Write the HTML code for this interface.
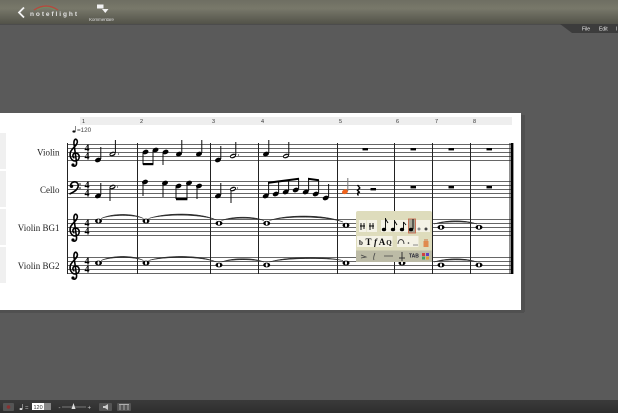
<!DOCTYPE html>
<html><head><meta charset="utf-8"><style>
html,body{margin:0;padding:0;width:618px;height:413px;overflow:hidden;background:#5a5a5a}
svg{display:block;position:absolute;left:0;top:0}
.s{font-family:"Liberation Serif",serif}
.a{font-family:"Liberation Sans",sans-serif}
</style></head><body>
<svg width="618" height="413" viewBox="0 0 618 413" xmlns="http://www.w3.org/2000/svg">
<defs>
<linearGradient id="h" x1="0" y1="0" x2="0" y2="1"><stop offset="0" stop-color="#6e6e62"/><stop offset=".35" stop-color="#78786a"/><stop offset="1" stop-color="#525249"/></linearGradient>
<linearGradient id="b" x1="0" y1="0" x2="0" y2="1"><stop offset="0" stop-color="#3a3a3a"/><stop offset="1" stop-color="#2e2e2e"/></linearGradient>
<filter id="bl" x="0" y="0" width="100%" height="100%"><feGaussianBlur stdDeviation="0.3"/></filter>
<g id="n"><ellipse cx="0" cy="0" rx="3.1" ry="2.2" transform="rotate(-22)" fill="#000"/></g>
<g id="o"><ellipse cx="0" cy="0" rx="3.2" ry="2.2" transform="rotate(-22)" fill="#111"/><ellipse cx="0" cy="0" rx="2.2" ry=".8" transform="rotate(-22)" fill="#fff"/></g>
<g id="w"><ellipse cx="0" cy="0" rx="3.5" ry="2.4" fill="#000"/><ellipse cx="0" cy="0" rx="1" ry="1.8" fill="#fff"/></g>
<g id="tc"><path d="M73 165.500C75 167.500 77 165 76.500 162L74 144C73.500 139.500 76 137.500 77.300 141C78.300 145 72 148 70.500 152C69 157 72 161 75 161C80.500 161 80.500 153 75.500 153C72.500 153 72 157 74.500 158" fill="none" stroke="#000" stroke-width="1.6"/><circle cx="73" cy="165" r="1.6" fill="#000"/></g>
</defs>
<rect width="618" height="24" fill="url(#h)"/>
<rect y="24" width="618" height="1" fill="#4c4c4c"/>
<path d="M24 7.500L19 12.500L24 17.500" fill="none" stroke="#f2f2f2" stroke-width="1.800"/>
<path d="M34 10Q46 2 58 10" fill="none" stroke="#b8483c" stroke-width="1.300"/>
<path d="M37 10Q46 5 55 10" fill="none" stroke="#6c9060" stroke-width=".8"/>
<text class="a" x="30" y="16" font-size="6.500" fill="#e4e4e4" textLength="47" lengthAdjust="spacing" font-weight="bold">noteflight</text>
<rect x="97" y="4.500" width="6.500" height="4" fill="#f2f2f2"/>
<path d="M102 9h6.500l-3.200 4z" fill="#f2f2f2"/>
<text class="a" x="89" y="21" font-size="4.700" fill="#d8d8d8" textLength="25">Kommentare</text>
<path d="M560 24H618V33H572Z" fill="#3c3c3c"/>
<text class="a" x="582" y="30.500" font-size="5" fill="#f0f0f0">File</text>
<text class="a" x="599" y="30.500" font-size="5" fill="#f0f0f0">Edit</text>
<text class="a" x="616" y="30.500" font-size="5" fill="#f0f0f0">I</text>
<rect x="521" y="115" width="4" height="197" fill="#505050"/>
<rect x="0" y="310" width="524" height="3" fill="#505050"/>
<rect x="0" y="113" width="521" height="197" fill="#fff"/>
<rect x="0" y="133" width="6" height="36" fill="#f0f0f0"/>
<rect x="0" y="171" width="6" height="36" fill="#f0f0f0"/>
<rect x="0" y="209" width="6" height="36" fill="#f0f0f0"/>
<rect x="0" y="247" width="6" height="36" fill="#f0f0f0"/>
<rect x="80" y="117" width="432" height="8" fill="#eeeeee"/>
<g filter="url(#bl)">
<g class="a" font-size="5.500" fill="#333">
<text x="82" y="123">1</text><text x="140" y="123">2</text><text x="212" y="123">3</text><text x="261" y="123">4</text><text x="339" y="123">5</text><text x="396" y="123">6</text><text x="435" y="123">7</text><text x="473" y="123">8</text>
</g>
<ellipse cx="74" cy="131.500" rx="1.600" ry="1.100" fill="#111"/><path d="M75.300 131.500V126" stroke="#111" stroke-width=".5"/>
<text class="a" x="77" y="132" font-size="6.300" fill="#444">=120</text>
<g class="s" font-size="9" fill="#222" text-anchor="end">
<text x="59.500" y="155.500">Violin</text>
<text x="59.500" y="193">Cello</text>
<text x="59.500" y="231">Violin BG1</text>
<text x="59.500" y="269">Violin BG2</text>
</g>
<g stroke="#666" stroke-width="1">
<path d="M67 144.500H511M67 148.500H511M67 152.500H511M67 156.500H511M67 160.500H511"/>
<path d="M67 181.500H511M67 185.500H511M67 189.500H511M67 193.500H511M67 197.500H511"/>
<path d="M67 219.500H511M67 223.500H511M67 227.500H511M67 231.500H511M67 235.500H511"/>
<path d="M67 257.500H511M67 261.500H511M67 265.500H511M67 269.500H511M67 273.500H511"/>
</g>
<g stroke="#222" stroke-width="1">
<path d="M67.500 143V274M137.500 143V274M210.500 143V274M258.500 143V274M337.500 143V274M394.500 143V274M432.500 143V274M470.500 143V274M510 143V274"/>
</g>
<rect x="511" y="143" width="2.400" height="131" fill="#000"/>
<use href="#tc"/>
<use href="#tc" y="75"/>
<use href="#tc" y="113"/>
<path d="M70.500 186.500C70 182 76 180 78 184C79.500 189 74 192 69.500 194" fill="none" stroke="#000" stroke-width="1.600"/>
<circle cx="71.500" cy="186.300" r="1.700" fill="#000"/><circle cx="80" cy="184" r=".8" fill="#000"/><circle cx="80" cy="188" r=".8" fill="#000"/>
<g class="s" font-size="10" font-weight="bold" fill="#000" text-anchor="middle">
<text x="87" y="151.500">4</text><text x="87" y="159.500">4</text>
<text x="87" y="188.500">4</text><text x="87" y="196.500">4</text>
<text x="87" y="226.500">4</text><text x="87" y="234.500">4</text>
<text x="87" y="264.500">4</text><text x="87" y="272.500">4</text>
</g>
<use href="#n" x="98" y="160"/><use href="#o" x="112.500" y="154"/>
<use href="#n" x="145.500" y="152"/><use href="#n" x="155.500" y="150"/><use href="#n" x="165.500" y="152"/>
<use href="#n" x="179" y="154"/><use href="#n" x="199" y="154"/>
<use href="#n" x="218" y="160"/><use href="#o" x="233" y="156"/>
<use href="#n" x="266" y="154"/><use href="#o" x="286" y="156"/>
<g stroke="#111" stroke-width="1" fill="none">
<path d="M100.800 159V147M115.400 153V140M143 153V164.500M153 151V164M163 153V165M181.800 153V140M201.800 153V140M220.800 159V146M235.800 155V142M268.800 153V140M288.800 155V142"/>
</g>
<path d="M143 163H153.400V165.200H143Z" fill="#000"/>
<circle cx="118.500" cy="154" r=".6" fill="#222"/><circle cx="238.500" cy="155" r=".6" fill="#222"/>
<use href="#n" x="98" y="196"/><use href="#o" x="112.500" y="187"/>
<use href="#n" x="145" y="182"/><use href="#n" x="165" y="183"/><use href="#n" x="178.500" y="186"/><use href="#n" x="189" y="183"/><use href="#n" x="199" y="186"/>
<use href="#n" x="218" y="196"/><use href="#o" x="233" y="189"/>
<use href="#n" x="265.700" y="196"/><use href="#n" x="275.700" y="194"/><use href="#n" x="285.700" y="192"/><use href="#n" x="295.700" y="190"/><use href="#n" x="305.700" y="192"/><use href="#n" x="315.700" y="194"/><use href="#n" x="325.700" y="198"/>
<g stroke="#111" stroke-width="1" fill="none">
<path d="M100.800 195V183M110 188V201M143 183V196M163 184V197M176 187V199M187 184V199M197 187V199M220.800 195V183M231 190V203"/>
<path d="M268.600 195V182.500M278.600 193V181M288.600 191V180M298.600 189V178.500M308.600 191V178.500M318.600 193V180M328.600 197V184"/>
</g>
<path d="M176 198H187.400V200.200H176ZM268 181.800L299 177.700V179.800L268 183.900ZM308 177.700L319 179.200V181.200L308 179.700Z" fill="#000"/>
<circle cx="117.500" cy="187" r=".6" fill="#222"/><circle cx="237.500" cy="188" r=".6" fill="#222"/>
<ellipse cx="345" cy="191.700" rx="3.100" ry="2.300" transform="rotate(-22 345 191.700)" fill="#f0641e"/>
<path d="M347.800 191V178" stroke="#777" stroke-width="1"/>
<path d="M357.500 185L359.800 188L357.500 190.500L359.800 192.500C357.500 192 357 194 358.500 195.500" fill="none" stroke="#000" stroke-width="1.400"/>
<g fill="#000">
<rect x="362.500" y="148" width="5.500" height="2.400"/><rect x="410.500" y="148" width="5.500" height="2.400"/><rect x="448.500" y="148" width="5.500" height="2.400"/><rect x="486.500" y="148" width="5.500" height="2.400"/>
<rect x="370.500" y="188" width="5.500" height="2.400"/><rect x="410.500" y="186" width="5.500" height="2.400"/><rect x="448.500" y="186" width="5.500" height="2.400"/><rect x="486.500" y="186" width="5.500" height="2.400"/>
</g>
<use href="#w" x="98.500" y="221"/><use href="#w" x="146" y="221"/><use href="#w" x="219" y="223.300"/><use href="#w" x="266.700" y="223.300"/><use href="#w" x="346" y="225.300"/><use href="#w" x="402" y="225.500"/><use href="#w" x="441" y="227.300"/><use href="#w" x="479" y="227.300"/>
<use href="#w" x="98.500" y="263"/><use href="#w" x="146" y="263"/><use href="#w" x="219" y="265"/><use href="#w" x="266.700" y="265"/><use href="#w" x="346" y="263"/><use href="#w" x="402" y="263"/><use href="#w" x="441" y="265"/><use href="#w" x="479" y="265"/>
<g fill="#222" stroke="#333" stroke-width=".5">
<path d="M101 218.500C112 213 134 213 143.500 218.500C134 214.500 112 214.500 101 218.500Z"/>
<path d="M148.500 218.500C165 212.500 200 212 216.500 220C200 213.800 165 214 148.500 218.500Z"/>
<path d="M221.500 220.500C232 216 254 216 264 220.500C254 217.500 232 217.500 221.500 220.500Z"/>
<path d="M269.500 220.500C285 214.500 325 214 343 222C325 215.800 285 216 269.500 220.500Z"/>
<path d="M434 224C445 220 465 219.500 477 224C465 221 445 221.500 434 224Z"/>
<path d="M101 260.500C112 255 134 255 143.500 260.500C134 256.500 112 256.500 101 260.500Z"/>
<path d="M148.500 260.500C165 255 200 254.500 216.500 262C200 256 165 256.500 148.500 260.500Z"/>
<path d="M221.500 262C232 257.500 254 257.500 264 262C254 259 232 259 221.500 262Z"/>
<path d="M269.500 262C285 256.500 325 256 343 260.500C325 257.500 285 258 269.500 262Z"/>
<path d="M434 262C445 258 465 257.500 477 262C465 259 445 259.500 434 262Z"/>
</g>
<rect x="356" y="211" width="76" height="51" rx="2" fill="#dedcbc"/>
<rect x="356" y="250.500" width="76" height="11.500" fill="#bcbba6"/>
<g fill="#f4f2e6">
<rect x="359" y="220" width="7.500" height="12"/><rect x="367" y="220" width="10" height="12"/>
<rect x="381" y="220" width="9" height="12"/><rect x="390" y="220" width="9" height="12"/><rect x="399" y="220" width="9" height="12"/><rect x="416" y="220" width="7" height="12"/><rect x="423" y="220" width="7" height="12"/>
<rect x="357" y="236" width="8" height="11"/><rect x="365" y="236" width="7" height="11"/><rect x="372" y="236" width="6.500" height="11"/><rect x="378.500" y="236" width="7" height="11"/><rect x="385.500" y="236" width="7" height="11"/>
<rect x="397" y="236" width="8" height="11"/><rect x="405" y="236" width="7" height="11"/><rect x="412" y="236" width="6.500" height="11"/>
</g>
<rect x="408.500" y="219" width="7" height="14" fill="#a8a898" stroke="#c86a50" stroke-width=".9"/>
<g fill="#000" stroke="#000" stroke-width=".9">
<path d="M361 223V230M364 223V229M370 223V230M373 223V229M360 226H365M369 226H374"/>
<ellipse cx="384" cy="229.500" rx="1.700" ry="1.300"/><path d="M385.500 229V218M385.500 219L388 223"/>
<ellipse cx="393" cy="229.500" rx="1.700" ry="1.300"/><path d="M394.500 229V220M394.500 221L397 225"/>
<ellipse cx="402" cy="229.500" rx="1.700" ry="1.300"/><path d="M403.500 229V222M403.500 222L406 225"/>
<ellipse cx="411" cy="229.500" rx="1.700" ry="1.300"/><path d="M413 229V219"/>
</g>
<circle cx="419" cy="229" r="1.500" fill="#888"/><circle cx="426" cy="229" r="1.500" fill="#444"/>
<g class="s" font-size="9" fill="#111" font-weight="bold" text-anchor="middle">
<text x="361" y="245" font-size="7">b</text><text x="368.500" y="245">T</text><text x="375.500" y="245" font-style="italic">f</text><text x="382" y="245">A</text><text x="389" y="245" font-size="7">Q</text>
</g>
<path d="M398 244C398 238 404 238 404 244" fill="none" stroke="#333" stroke-width=".9"/>
<circle cx="408.500" cy="243" r=".8" fill="#333"/><path d="M413 245H418" stroke="#888" stroke-width="1"/>
<rect x="423.500" y="241" width="5" height="6" fill="#e08a50"/><rect x="424" y="239.500" width="4" height="1" fill="#c87040"/>
<path d="M361 255L366 257L361 258M375 253Q373 258 374 260M384 256H393" fill="none" stroke="#444" stroke-width=".8"/>
<path d="M402 252V261M399 258H405" stroke="#333" stroke-width="1"/>
<text class="a" x="409" y="257.500" font-size="5" font-weight="bold" fill="#223">TAB</text>
<rect x="422" y="253" width="3" height="3" fill="#d04040"/><rect x="426" y="253" width="3" height="3" fill="#6040c0"/><rect x="422" y="256.500" width="3" height="3" fill="#40a060"/><rect x="426" y="256.500" width="3" height="3" fill="#e0a030"/>
</g>
<rect y="400" width="618" height="13" fill="url(#b)"/>
<rect x="3" y="403" width="11" height="8" rx="1" fill="#555"/><circle cx="8.500" cy="407" r="1.800" fill="#8a3030"/>
<ellipse cx="21" cy="409" rx="1.500" ry="1" fill="#ddd"/><path d="M22.300 409V404" stroke="#ddd" stroke-width=".5"/>
<text class="a" x="25" y="409.500" font-size="6" fill="#bbb">=</text>
<rect x="32" y="403" width="12" height="7" fill="#fff"/>
<text class="a" x="33.500" y="409" font-size="5.500" fill="#333">120</text>
<rect x="44" y="403" width="7" height="7" fill="#888"/>
<text class="a" x="58.500" y="409.500" font-size="6" fill="#ccc">-</text>
<path d="M62 407H86" stroke="#777" stroke-width="1"/><path d="M73.500 403L75.500 409H71.500Z" fill="#ddd"/>
<text class="a" x="87.500" y="409.500" font-size="6" fill="#ccc">+</text>
<rect x="99" y="403" width="13" height="8" rx="1" fill="#555"/><path d="M103 406H105L108 404V410L105 408H103Z" fill="#ccc"/>
<rect x="117" y="403" width="14" height="8" rx="1" fill="#555"/><path d="M120 405V410M124 405V410M128 405V410M119 404.500H129" stroke="#ccc" stroke-width=".7"/>
</svg>
</body></html>
